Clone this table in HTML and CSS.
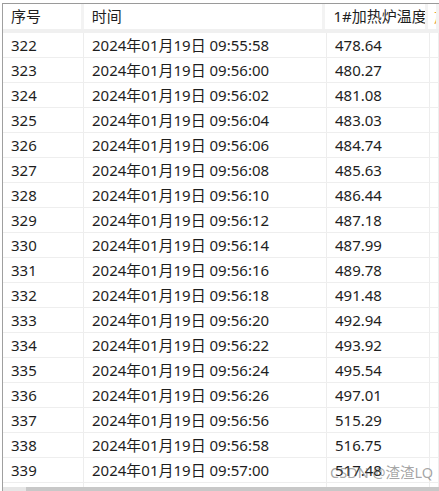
FILE: index.html
```html
<!DOCTYPE html>
<html>
<head>
<meta charset="utf-8">
<link rel="stylesheet" href="styles.css">
</head>
<body>
<div class="frame">
  <div class="grid">
    <div class="row head">
      <div class="c c1">序号</div>
      <div class="c c2">时间</div>
      <div class="c c3">1#加热炉温度</div>
      <div class="c c4"><span class="cut">加</span></div>
    </div>
    <div class="row"><div class="c c1">322</div><div class="c c2">2024年01月19日 09:55:58</div><div class="c c3">478.64</div><div class="c c4"></div></div>
    <div class="row"><div class="c c1">323</div><div class="c c2">2024年01月19日 09:56:00</div><div class="c c3">480.27</div><div class="c c4"></div></div>
    <div class="row"><div class="c c1">324</div><div class="c c2">2024年01月19日 09:56:02</div><div class="c c3">481.08</div><div class="c c4"></div></div>
    <div class="row"><div class="c c1">325</div><div class="c c2">2024年01月19日 09:56:04</div><div class="c c3">483.03</div><div class="c c4"></div></div>
    <div class="row"><div class="c c1">326</div><div class="c c2">2024年01月19日 09:56:06</div><div class="c c3">484.74</div><div class="c c4"></div></div>
    <div class="row"><div class="c c1">327</div><div class="c c2">2024年01月19日 09:56:08</div><div class="c c3">485.63</div><div class="c c4"></div></div>
    <div class="row"><div class="c c1">328</div><div class="c c2">2024年01月19日 09:56:10</div><div class="c c3">486.44</div><div class="c c4"></div></div>
    <div class="row"><div class="c c1">329</div><div class="c c2">2024年01月19日 09:56:12</div><div class="c c3">487.18</div><div class="c c4"></div></div>
    <div class="row"><div class="c c1">330</div><div class="c c2">2024年01月19日 09:56:14</div><div class="c c3">487.99</div><div class="c c4"></div></div>
    <div class="row"><div class="c c1">331</div><div class="c c2">2024年01月19日 09:56:16</div><div class="c c3">489.78</div><div class="c c4"></div></div>
    <div class="row"><div class="c c1">332</div><div class="c c2">2024年01月19日 09:56:18</div><div class="c c3">491.48</div><div class="c c4"></div></div>
    <div class="row"><div class="c c1">333</div><div class="c c2">2024年01月19日 09:56:20</div><div class="c c3">492.94</div><div class="c c4"></div></div>
    <div class="row"><div class="c c1">334</div><div class="c c2">2024年01月19日 09:56:22</div><div class="c c3">493.92</div><div class="c c4"></div></div>
    <div class="row"><div class="c c1">335</div><div class="c c2">2024年01月19日 09:56:24</div><div class="c c3">495.54</div><div class="c c4"></div></div>
    <div class="row"><div class="c c1">336</div><div class="c c2">2024年01月19日 09:56:26</div><div class="c c3">497.01</div><div class="c c4"></div></div>
    <div class="row"><div class="c c1">337</div><div class="c c2">2024年01月19日 09:56:56</div><div class="c c3">515.29</div><div class="c c4"></div></div>
    <div class="row"><div class="c c1">338</div><div class="c c2">2024年01月19日 09:56:58</div><div class="c c3">516.75</div><div class="c c4"></div></div>
    <div class="row"><div class="c c1">339</div><div class="c c2">2024年01月19日 09:57:00</div><div class="c c3">517.48</div><div class="c c4"></div></div>
    <div class="row"><div class="c c1"></div><div class="c c2"></div><div class="c c3"></div><div class="c c4"></div></div>
  </div>
  <div class="hscroll"><div class="thumb"></div></div>
  <div class="mark">CSDN @渣渣LQ</div>
</div>
</body>
</html>
```

FILE: styles.css
```css
html, body {
  margin: 0;
  padding: 0;
  background: #fff;
}
body {
  width: 439px;
  height: 491px;
  overflow: hidden;
  font-family: "Noto Sans", "Noto Sans CJK SC", sans-serif;
  font-size: 15px;
  color: #1e1e1e;
}
.frame {
  position: relative;
  margin: 3px 0 0 2px;
  height: 488px;
  border-top: 1px solid #9a9a9a;
  border-left: 1px solid #a0a0a0;
  display: flex;
  flex-direction: column;
  overflow: hidden;
}
.grid {
  flex: 1;
  overflow: hidden;
}
.row {
  display: flex;
  height: 25px;
  border-bottom: 1px solid #eeeeee;
  box-sizing: border-box;
}
.row.head {
  height: 29px;
  border-bottom: 4px solid #f0f0f0;
}
.c {
  box-sizing: border-box;
  border-right: 1px solid #ededed;
  padding-left: 8px;
  line-height: 24px;
  white-space: nowrap;
  overflow: hidden;
}
.head .c {
  line-height: 25px;
  border-right: 3px solid #f3f3f3;
}
.c1 { width: 81px; }
.c2 { width: 243px; }
.c3 { width: 103px; }
.c4 { flex: 1; }
.cut { color: #e8a23a; margin-left: -2px; }
.hscroll {
  height: 5px;
  background: #e6e6e6;
  display: flex;
}
.thumb {
  margin-left: 23px;
  flex: 1;
  background: #c8c8c8;
}
.mark {
  position: absolute;
  left: 327px;
  top: 457px;
  font-size: 14.5px;
  color: rgba(90, 90, 90, 0.55);
}
```
